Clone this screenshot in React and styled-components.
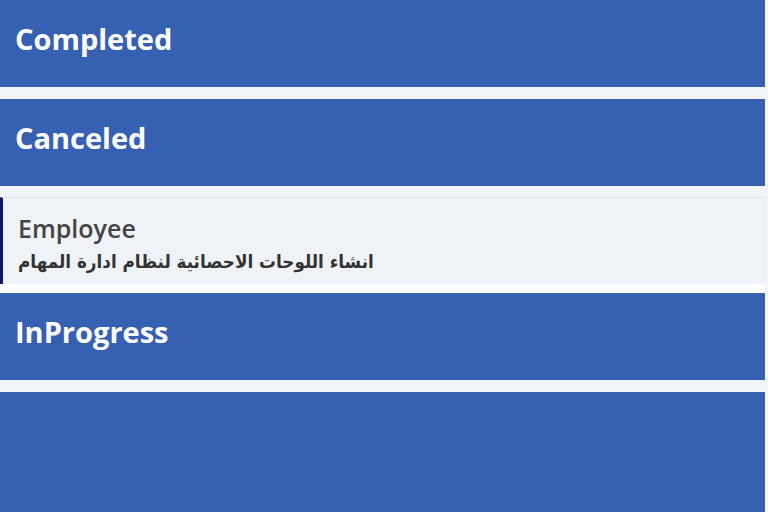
import styled, { createGlobalStyle } from "styled-components";

const Global = createGlobalStyle`
  html, body {
    margin: 0;
    padding: 0;
    background: #f1f4f9;
    font-family: "Open Sans", "DejaVu Sans", sans-serif;
  }
`;

const Board = styled.div`
  display: flex;
  flex-direction: column;
  box-sizing: border-box;
  padding: 0 3px 0 0;
  height: 512px;
  overflow: hidden;
`;

const Column = styled.section`
  display: flex;
  flex-direction: column;
  margin-bottom: ${(p) => (p.$hasCards || p.$last ? "0" : "12px")};
  flex: ${(p) => (p.$last ? "1" : "none")};
`;

const Header = styled.div`
  background: #3660b1;
  height: ${(p) => (p.$last ? "auto" : "87px")};
  flex: ${(p) => (p.$last ? "1" : "none")};
  box-sizing: border-box;
  padding: 20px 15px 0;
  h2 {
    margin: 0;
    color: #ffffff;
    font-size: 29px;
    font-weight: 700;
    line-height: 38px;
  }
`;

const Cards = styled.div`
  display: flex;
  flex-direction: column;
  padding: 11px 0 9px;
  background: linear-gradient(#f1f4f9 0 50%, #ffffff 50% 100%);
`;

const Card = styled.div`
  height: 87px;
  box-sizing: border-box;
  background: #eff3f8;
  border-top: 1px solid #dde3ec;
  border-left: 3px solid #0c1a6e;
  padding: 14px 15px 0;
  h3 {
    margin: 0;
    color: #444444;
    font-size: 25px;
    font-weight: 600;
    line-height: 32px;
  }
  p {
    margin: 3px 0 0;
    color: #333333;
    font-size: 18.7px;
    font-weight: 700;
    line-height: 30px;
    font-family: "DejaVu Sans Condensed", "DejaVu Sans", sans-serif;
  }
`;

const columns = [
  { title: "Completed", cards: [] },
  {
    title: "Canceled",
    cards: [
      { who: "Employee", task: "انشاء اللوحات الاحصائية لنظام ادارة المهام" },
    ],
  },
  { title: "InProgress", cards: [] },
  { title: "", cards: [] },
];

export default function App() {
  return (
    <>
      <Global />
      <Board>
        {columns.map((col, i) => {
          const last = i === columns.length - 1;
          return (
            <Column key={i} $hasCards={col.cards.length > 0} $last={last}>
              <Header $last={last}>
                <h2>{col.title}</h2>
              </Header>
              {col.cards.length > 0 && (
                <Cards>
                  {col.cards.map((c, j) => (
                    <Card key={j}>
                      <h3>{c.who}</h3>
                      <p>{c.task}</p>
                    </Card>
                  ))}
                </Cards>
              )}
            </Column>
          );
        })}
      </Board>
    </>
  );
}
